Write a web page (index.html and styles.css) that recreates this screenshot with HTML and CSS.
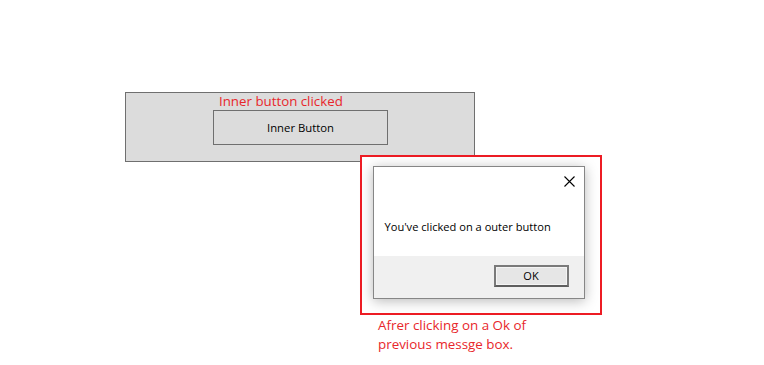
FILE: index.html
```html
<!DOCTYPE html>
<html>
<head>
<meta charset="utf-8">
<link rel="stylesheet" href="styles.css">
</head>
<body>
<div class="page">
  <div class="panel">
    <div class="status">Inner button clicked</div>
    <div class="inner-btn">Inner Button</div>
  </div>
  <div class="annotation">
    <div class="frame">
      <div class="dialog">
        <div class="dialog-body">
          <div class="close">
            <svg width="11" height="11" viewBox="0 0 11 11"><path d="M0.5 0.5 L10.5 10.5 M10.5 0.5 L0.5 10.5" stroke="#000" stroke-width="1.1" fill="none"/></svg>
          </div>
          <div class="message">You've clicked on a outer button</div>
        </div>
        <div class="dialog-foot">
          <div class="ok">OK</div>
        </div>
      </div>
    </div>
    <div class="caption">Afrer clicking on a Ok of<br>previous messge box.</div>
  </div>
</div>
</body>
</html>
```
FILE: styles.css
```css
html, body { margin: 0; padding: 0; background: #fff; }
.page { position: relative; width: 764px; height: 365px; overflow: hidden; font-family: "Open Sans", "DejaVu Sans", sans-serif; }
.panel {
  box-sizing: border-box;
  margin: 92px 0 0 125px;
  width: 350px; height: 70px;
  background: #dcdcdc;
  border: 1px solid #6f6f6f;
  display: flex; flex-direction: column;
}
.status { color: #e8262b; font-size: 13.3px; line-height: 16px; margin: 0 0 0 93px; }
.inner-btn {
  box-sizing: border-box;
  margin: 1px 0 0 87px;
  width: 175px; height: 35px;
  border: 1px solid #6f6f6f;
  display: flex; align-items: center; justify-content: center;
  font-size: 11.3px; color: #000;
}
.annotation { position: absolute; left: 360px; top: 155px; }
.frame {
  box-sizing: border-box;
  width: 242px; height: 160px;
  border: 2.5px solid #ed1c24;
  background: #fff;
  padding: 8.5px 0 0 10.5px;
}
.dialog {
  box-sizing: border-box;
  width: 212px; height: 133px;
  border: 1px solid #868686;
  background: #fff;
  box-shadow: 0 2px 12px rgba(0,0,0,0.28);
  display: flex; flex-direction: column;
}
.dialog-body { height: 89px; position: relative; display: flex; flex-direction: column; }
.close { display: flex; justify-content: flex-end; padding: 9px 9px 0 0; height: 11px; }
.close svg { display: block; }
.message { font-size: 11.1px; color: #000; margin: 33px 0 0 11px; line-height: 14px; }
.dialog-foot { flex: 1; background: #f0f0f0; display: flex; justify-content: flex-end; align-items: flex-start; padding: 9px 15px 0 0; }
.ok {
  box-sizing: border-box;
  width: 75px; height: 22px;
  border: 2px solid #7a7a7a;
  border-bottom-color: #5e5e5e;
  background: #e6e6e6;
  box-shadow: inset 0 0 0 1px #f4f4f4;
  display: flex; align-items: center; justify-content: center;
  font-size: 11px; color: #000;
}
.caption { color: #e8262b; font-size: 13.4px; line-height: 19px; margin: 1px 0 0 18px; }
```
